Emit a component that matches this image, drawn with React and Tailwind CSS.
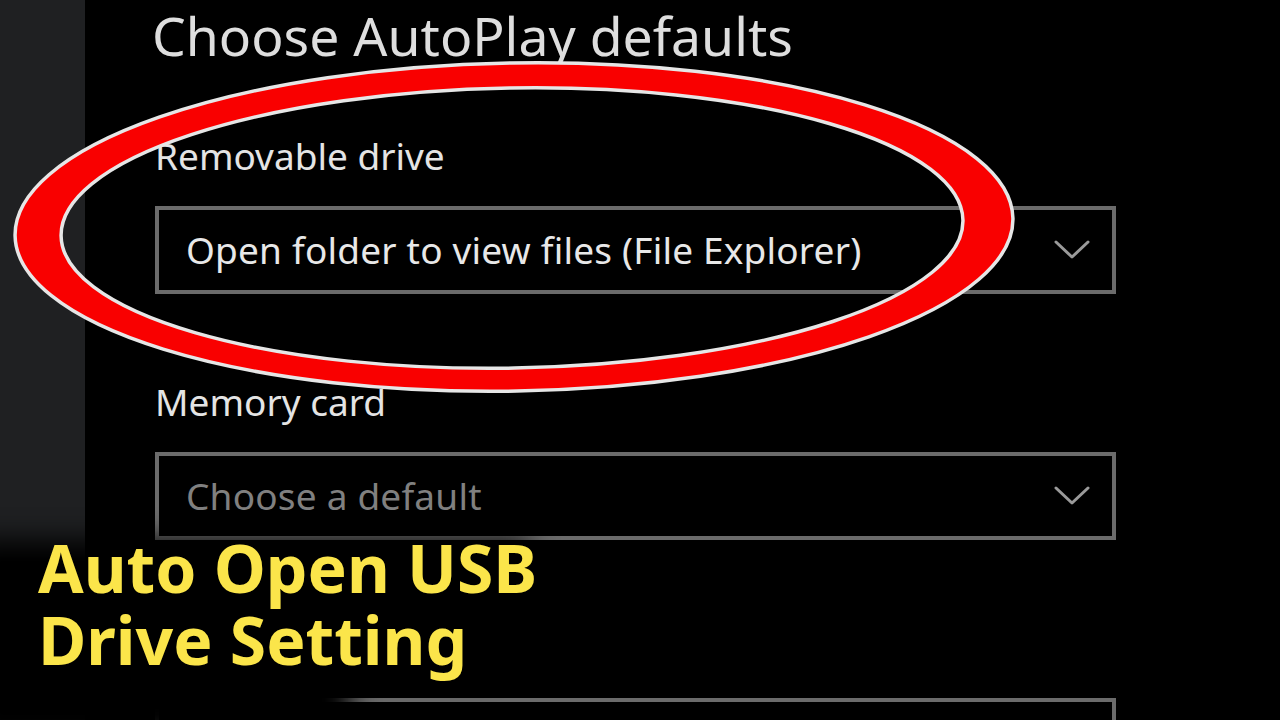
function Chevron() {
  return (
    <svg width="36" height="20" viewBox="0 0 36 20" className="shrink-0">
      <polyline points="2,2 18,17 34,2" fill="none" stroke="#9a9a9a" strokeWidth="3" strokeLinecap="round" strokeLinejoin="round" />
    </svg>
  );
}

function Group({ label, value, placeholder }) {
  return (
    <div className="flex flex-col gap-[32px]">
      {label ? (
        <div className="text-[37px] leading-none text-[#e4e4e4]">{label}</div>
      ) : (
        <div className="h-[37px]" />
      )}
      <div className="w-[961px] h-[88px] border-[4px] border-[#6b6b6b] flex items-center justify-between pl-[27px] pr-[22px]">
        <span className={`text-[37px] leading-none tracking-[0.2px] ${placeholder ? "text-[#808080]" : "text-[#e8e8e8]"}`}>{value}</span>
        {value ? <Chevron /> : null}
      </div>
    </div>
  );
}

export default function App() {
  return (
    <div className="relative w-[1280px] h-[720px] overflow-hidden bg-black flex font-['Noto_Sans',sans-serif]">
      <div className="w-[85px] shrink-0 bg-[#1f2022]" />
      <div className="flex-1 pl-[70px] pt-[9px] flex flex-col">
        <h1 className="-ml-[3px] text-[53.5px] leading-none text-[#dedede] font-normal whitespace-nowrap">Choose AutoPlay defaults</h1>
        <div className="mt-[74px] flex flex-col gap-[89px]">
          <Group label="Removable drive" value="Open folder to view files (File Explorer)" />
          <Group label="Memory card" value="Choose a default" placeholder />
          <Group label={null} value="" />
        </div>
      </div>

      <svg className="absolute left-0 top-0 pointer-events-none" width="1280" height="720" viewBox="0 0 1280 720">
        <g transform="rotate(-1 514 227)">
          <path
            fillRule="evenodd"
            fill="#f90000"
            stroke="#e6e6e6"
            strokeWidth="3.5"
            d="M15,227 A499,164 0 1,0 1013,227 A499,164 0 1,0 15,227 Z M61,228 A451,140 0 1,0 963,228 A451,140 0 1,0 61,228 Z"
          />
        </g>
      </svg>

      <div className="absolute left-[-30px] top-[540px] w-[560px] h-[90px] bg-black blur-[14px]" />
      <div className="absolute left-[-30px] top-[590px] w-[380px] h-[150px] bg-black blur-[14px]" />
      <div className="absolute left-[-30px] top-[590px] w-[520px] h-[90px] bg-black blur-[10px]" />

      <div className="absolute left-[38px] top-[531px] text-[66px] leading-[72px] font-bold text-[#fbe54a] whitespace-nowrap">
        <div>Auto Open USB</div>
        <div>Drive Setting</div>
      </div>
    </div>
  );
}
